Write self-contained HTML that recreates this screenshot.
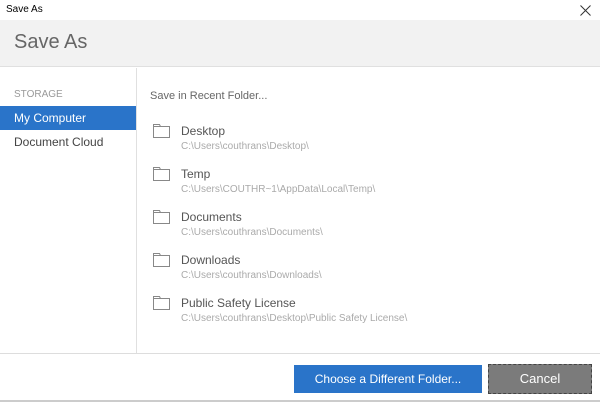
<!DOCTYPE html>
<html><head><style>
*{margin:0;padding:0;box-sizing:border-box}
body{width:600px;height:402px;background:#fff;font-family:"Liberation Sans",sans-serif;position:relative;overflow:hidden;color:#444}
.a{position:absolute;white-space:nowrap}
</style></head><body>
<div class="a" style="left:6px;top:4px;font-size:10px;color:#000">Save As</div>
<div class="a" style="left:580px;top:3px"><svg width="11" height="11"><path d="M0.5 0.5L10.5 10.5M10.5 0.5L0.5 10.5" stroke="#333" stroke-width="1"/></svg></div>
<div class="a" style="left:0;top:20px;width:600px;height:47px;background:#f2f2f2;border-bottom:1px solid #e0e0e0"></div>
<div class="a" style="left:14px;top:31px;font-size:20px;color:#666">Save As</div>
<div class="a" style="left:136px;top:68px;width:1px;height:285px;background:#e0e0e0"></div>
<div class="a" style="left:14px;top:89px;font-size:10px;color:#999">STORAGE</div>
<div class="a" style="left:0;top:106px;width:136px;height:24px;background:#2a74c9"></div>
<div class="a" style="left:14px;top:111px;font-size:12px;color:#fff">My Computer</div>
<div class="a" style="left:14px;top:135px;font-size:12px;color:#444">Document Cloud</div>
<div class="a" style="left:150px;top:90px;font-size:11px;color:#666">Save in Recent Folder...</div>

<div class="a" style="left:153px;top:124px"><svg width="18" height="14"><path d="M0.5 13.5V0.5H6.5L7.5 2.5H16.5V13.5Z M0.5 2.5H7.5" fill="none" stroke="#888"/></svg></div>
<div class="a" style="left:181px;top:124px;font-size:12px;color:#555">Desktop</div>
<div class="a" style="left:181px;top:141px;font-size:10px;color:#aaa">C:\Users\couthrans\Desktop\</div>

<div class="a" style="left:153px;top:167px"><svg width="18" height="14"><path d="M0.5 13.5V0.5H6.5L7.5 2.5H16.5V13.5Z M0.5 2.5H7.5" fill="none" stroke="#888"/></svg></div>
<div class="a" style="left:181px;top:167px;font-size:12px;color:#555">Temp</div>
<div class="a" style="left:181px;top:184px;font-size:10px;color:#aaa">C:\Users\COUTHR~1\AppData\Local\Temp\</div>

<div class="a" style="left:153px;top:210px"><svg width="18" height="14"><path d="M0.5 13.5V0.5H6.5L7.5 2.5H16.5V13.5Z M0.5 2.5H7.5" fill="none" stroke="#888"/></svg></div>
<div class="a" style="left:181px;top:210px;font-size:12px;color:#555">Documents</div>
<div class="a" style="left:181px;top:227px;font-size:10px;color:#aaa">C:\Users\couthrans\Documents\</div>

<div class="a" style="left:153px;top:253px"><svg width="18" height="14"><path d="M0.5 13.5V0.5H6.5L7.5 2.5H16.5V13.5Z M0.5 2.5H7.5" fill="none" stroke="#888"/></svg></div>
<div class="a" style="left:181px;top:253px;font-size:12px;color:#555">Downloads</div>
<div class="a" style="left:181px;top:270px;font-size:10px;color:#aaa">C:\Users\couthrans\Downloads\</div>

<div class="a" style="left:153px;top:296px"><svg width="18" height="14"><path d="M0.5 13.5V0.5H6.5L7.5 2.5H16.5V13.5Z M0.5 2.5H7.5" fill="none" stroke="#888"/></svg></div>
<div class="a" style="left:181px;top:296px;font-size:12px;color:#555">Public Safety License</div>
<div class="a" style="left:181px;top:313px;font-size:10px;color:#aaa">C:\Users\couthrans\Desktop\Public Safety License\</div>

<div class="a" style="left:0;top:353px;width:600px;height:1px;background:#ddd"></div>
<div class="a" style="left:294px;top:365px;width:188px;height:28px;background:#2a74c9;color:#fff;font-size:12px;text-align:center;line-height:28px">Choose a Different Folder...</div>
<div class="a" style="left:488px;top:364px;width:104px;height:30px;background:#7b7b7b;border:1px dashed #444;color:#fff;font-size:13px;text-align:center;line-height:28px">Cancel</div>
<div class="a" style="left:0;top:400px;width:600px;height:2px;background:#ccc"></div>
</body></html>
